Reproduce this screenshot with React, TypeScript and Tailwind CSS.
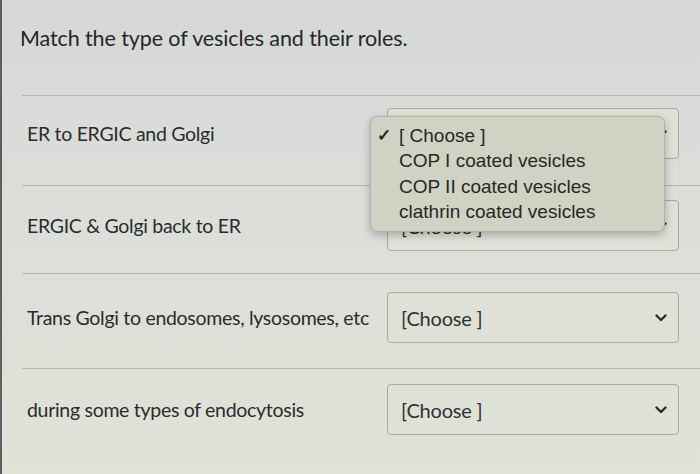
import React from "react";

interface RowProps {
  label: string;
  padTop: string;
  padBottom: string;
}

const rows: RowProps[] = [
  { label: "ER to ERGIC and Golgi", padTop: "pt-[12px]", padBottom: "pb-[26px]" },
  { label: "ERGIC & Golgi back to ER", padTop: "pt-[14px]", padBottom: "pb-[22px]" },
  { label: "Trans Golgi to endosomes, lysosomes, etc", padTop: "pt-[18px]", padBottom: "pb-[25px]" },
  { label: "during some types of endocytosis", padTop: "pt-[15px]", padBottom: "pb-[20px]" },
];

const options = ["[ Choose ]", "COP I coated vesicles", "COP II coated vesicles", "clathrin coated vesicles"];

function Chevron() {
  return (
    <svg width="12" height="8" viewBox="0 0 12 8" className="shrink-0">
      <polyline points="1.5,1.5 6,6 10.5,1.5" fill="none" stroke="#2b2d2c" strokeWidth="2.4" strokeLinecap="round" strokeLinejoin="round" />
    </svg>
  );
}

function MatchRow({ label, padTop, padBottom }: RowProps) {
  return (
    <div className={`grid grid-cols-[360px_292px] items-center pl-[25px] ${padTop} ${padBottom}`}>
      <span className="text-[19.5px] text-[#2a2c2d] -tracking-[0.3px]">{label}</span>
      <div className="flex h-[51px] items-center justify-between rounded-[4px] border border-[#a7aaa2] bg-[#dfe1d7] pl-[13px] pr-[11px]">
        <span className="text-[20px] text-[#2f3131] -tracking-[0.2px]">[Choose ]</span>
        <Chevron />
      </div>
    </div>
  );
}

export default function App() {
  return (
    <div
      className="relative h-[474px] w-[700px] overflow-hidden border-l-2 border-[#5d5f5e] bg-gradient-to-b from-[#d6d8d8] via-[#dcdfd9] to-[#e0e2d6]"
      style={{ fontFamily: "Lato, 'Open Sans', sans-serif" }}
    >
      {/* Question header */}
      <div className="h-[95px] pl-[18px] pt-[22px]">
        <h1 className="text-[21.5px] text-[#252728] -tracking-[0.1px]">Match the type of vesicles and their roles.</h1>
      </div>

      {rows.map((row) => (
        <div key={row.label}>
          <div className="ml-[20px] border-t border-[#b3b6b0]" />
          <MatchRow {...row} />
        </div>
      ))}

      {/* Open native dropdown menu over the first select */}
      <div
        className="absolute left-[368px] top-[116px] w-[295px] rounded-[7px] border border-[#b0b3a6] bg-[#d0d3c3] pb-[6px] pt-[6px] shadow-[0_3px_8px_rgba(0,0,0,0.25)]"
        style={{ fontFamily: "'Liberation Sans', Arial, sans-serif" }}
      >
        {options.map((opt, i) => (
          <div key={opt} className="flex h-[25.5px] items-center text-[19px] text-[#262827]">
            <span className="w-[28px] pl-[6px] text-[17px] font-bold">{i === 0 ? "✓" : ""}</span>
            <span>{opt}</span>
          </div>
        ))}
      </div>
    </div>
  );
}
